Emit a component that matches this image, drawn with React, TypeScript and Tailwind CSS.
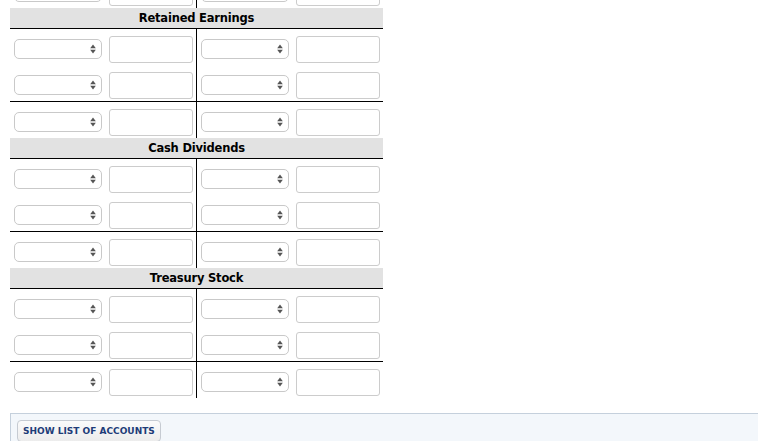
const sections = ["Retained Earnings", "Cash Dividends", "Treasury Stock"];

function Arrows() {
  return (
    <svg width="6" height="10" viewBox="0 0 6 10" className="shrink-0">
      <path d="M3 0.5 L5.8 4.2 L0.2 4.2 Z" fill="#555555" />
      <path d="M3 9.5 L5.8 5.8 L0.2 5.8 Z" fill="#555555" />
    </svg>
  );
}

function Select() {
  return (
    <div className="w-[88px] h-[20px] rounded-[5px] border border-[#c9c9c9] bg-white flex items-center justify-end pr-[5px]">
      <Arrows />
    </div>
  );
}

function Input() {
  return <div className="w-[84px] h-[27px] rounded-[3px] border border-[#cccccc] bg-white" />;
}

function Cell({ left }: { left?: boolean }) {
  return (
    <div
      className={
        "flex items-center gap-[7px] pl-[4px] pt-[4px] " +
        (left ? "w-[187px] border-r border-black" : "w-[186px]")
      }
    >
      <Select />
      <Input />
    </div>
  );
}

function Row({ line }: { line?: boolean }) {
  return (
    <div className={"flex h-[36px] " + (line ? "box-content border-b border-black" : "")}>
      <Cell left />
      <Cell />
    </div>
  );
}

function Section({ title }: { title: string }) {
  return (
    <div>
      <div className="h-[20px] bg-[#e2e2e2] border-b border-black box-content flex items-center justify-center text-[11.5px] font-bold text-black font-['DejaVu_Sans',sans-serif] tracking-[-0.2px]">
        <span className="translate-y-[1px]">{title}</span>
      </div>
      <Row />
      <Row line />
      <Row />
    </div>
  );
}

export default function App() {
  return (
    <div className="w-[758px] h-[441px] overflow-hidden bg-white">
      <div className="ml-[10px] w-[373px]">
        <div className="h-[8px] overflow-hidden">
          <div className="mt-[-28px]">
            <Row />
          </div>
        </div>
        {sections.map((s) => (
          <Section key={s} title={s} />
        ))}
      </div>
      <div className="mt-[15px] ml-[10px] h-[40px] border-t border-l border-[#c5d0dc] bg-[#f3f7fb] pt-[6px] pl-[6px] flex items-start">
        <button className="h-[22px] px-[5px] rounded-[4px] border border-[#c6cbd2] bg-gradient-to-b from-[#fbfbfb] to-[#ececec] text-[9px] leading-none font-bold text-[#1e3c78] font-['DejaVu_Sans',sans-serif] flex items-center">
          SHOW LIST OF ACCOUNTS
        </button>
      </div>
    </div>
  );
}
